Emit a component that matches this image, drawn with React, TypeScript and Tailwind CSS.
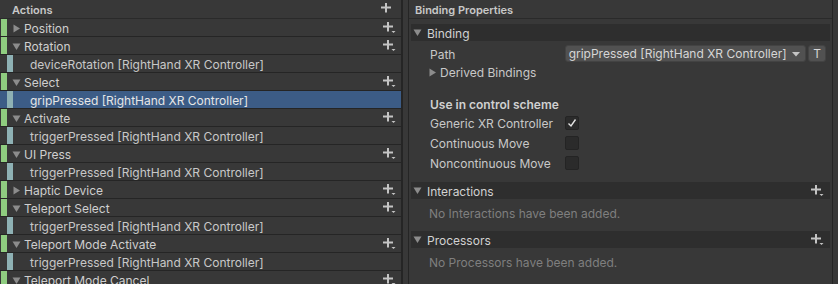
import React from 'react';

type Row =
  | { kind: 'action'; name: string; open: boolean }
  | { kind: 'binding'; name: string; selected?: boolean };

const rows: Row[] = [
  { kind: 'action', name: 'Position', open: false },
  { kind: 'action', name: 'Rotation', open: true },
  { kind: 'binding', name: 'deviceRotation [RightHand XR Controller]' },
  { kind: 'action', name: 'Select', open: true },
  { kind: 'binding', name: 'gripPressed [RightHand XR Controller]', selected: true },
  { kind: 'action', name: 'Activate', open: true },
  { kind: 'binding', name: 'triggerPressed [RightHand XR Controller]' },
  { kind: 'action', name: 'UI Press', open: true },
  { kind: 'binding', name: 'triggerPressed [RightHand XR Controller]' },
  { kind: 'action', name: 'Haptic Device', open: false },
  { kind: 'action', name: 'Teleport Select', open: true },
  { kind: 'binding', name: 'triggerPressed [RightHand XR Controller]' },
  { kind: 'action', name: 'Teleport Mode Activate', open: true },
  { kind: 'binding', name: 'triggerPressed [RightHand XR Controller]' },
  { kind: 'action', name: 'Teleport Mode Cancel', open: true },
];

// foldout arrow
function Arrow({ open }: { open: boolean }) {
  return (
    <svg width="9" height="9" viewBox="0 0 9 9" className="shrink-0">
      {open ? (
        <polygon points="0.5,1.5 8.5,1.5 4.5,8" fill="#8c8c8c" />
      ) : (
        <polygon points="1.5,0.5 8,4.5 1.5,8.5" fill="#8c8c8c" />
      )}
    </svg>
  );
}

function Plus({ dropdown = true }: { dropdown?: boolean }) {
  return (
    <svg width="13" height="12" viewBox="0 0 13 12" className="shrink-0">
      <rect x="0" y="3.5" width="10" height="2" fill="#c4c4c4" />
      <rect x="4" y="-0.5" width="2" height="10" fill="#c4c4c4" />
      {dropdown && <polygon points="8.5,9 12.5,9 10.5,11" fill="#c4c4c4" />}
    </svg>
  );
}

function Checkbox({ checked }: { checked?: boolean }) {
  return (
    <div className="w-[14px] h-[14px] rounded-[2px] bg-[#2b2b2b] border border-[#242424] flex items-center justify-center">
      {checked && (
        <svg width="10" height="10" viewBox="0 0 10 10">
          <polyline points="1.5,5.5 4,8 8.5,1.5" fill="none" stroke="#e4e4e4" strokeWidth="1.4" />
        </svg>
      )}
    </div>
  );
}

function Foldout({ title, plus }: { title: string; plus?: boolean }) {
  return (
    <div className="h-[17px] bg-[#2e2e2e] flex items-center pl-[2px] pr-[6px]">
      <Arrow open />
      <span className="ml-[5px] pt-[2px] text-[#d2d2d2]">{title}</span>
      <div className="flex-1" />
      {plus && <Plus />}
    </div>
  );
}

export default function App() {
  return (
    <div
      className="w-[838px] h-[284px] overflow-hidden bg-[#383838] flex text-[12px] leading-none text-[#c8c8c8]"
      style={{ fontFamily: 'Inter, "Noto Sans", sans-serif' }}
    >
      {/* Actions list */}
      <div className="w-[403px] shrink-0 flex flex-col border-r-2 border-[#252525]">
        <div className="h-[19px] shrink-0 flex items-center pl-[12px] pr-[7px] border-b border-[#2a2a2a]">
          <span className="pt-[2px] text-[11px] font-semibold text-[#c8c8c8]">Actions</span>
          <div className="flex-1" />
          <Plus dropdown={false} />
        </div>
        {rows.map((r, i) =>
          r.kind === 'action' ? (
            <div key={i} className="h-[18px] shrink-0 flex items-center border-b border-[#252525] pl-[1px] pr-[5px]">
              <div className="w-[6px] h-full bg-[#8fcd80]" />
              <div className="ml-[5px] pt-[1px]">
                <Arrow open={r.open} />
              </div>
              <span className="ml-[3px] pt-[2px] text-[#cfcfcf]">{r.name}</span>
              <div className="flex-1" />
              <Plus />
            </div>
          ) : (
            <div
              key={i}
              className={
                r.selected
                  ? 'h-[18px] shrink-0 flex items-center border-b border-[#252525] bg-[#3c5c86] pl-[7px]'
                  : 'h-[18px] shrink-0 flex items-center border-b border-[#252525] pl-[7px]'
              }
            >
              <div className="w-[6px] h-full bg-[#8eb1b4]" />
              <span className={r.selected ? 'ml-[17px] pt-[2px] text-[#e6e6e6]' : 'ml-[17px] pt-[2px] text-[#c8c8c8]'}>
                {r.name}
              </span>
            </div>
          )
        )}
      </div>

      {/* Binding properties */}
      <div className="ml-[5px] w-[425px] shrink-0 flex flex-col border-l border-r border-[#252525]">
        <div className="h-[19px] shrink-0 flex items-center pl-[6px] border-b border-[#2a2a2a]">
          <span className="pt-[2px] text-[11px] font-semibold text-[#c8c8c8]">Binding Properties</span>
        </div>
        <div className="flex flex-col px-[2px] pt-[5px]">
          <Foldout title="Binding" />
          <div className="mt-[4px] h-[17px] flex items-center pl-[19px] pr-[4px]">
            <span className="w-[135px] pt-[2px]">Path</span>
            <div className="w-[242px] h-[17px] rounded-[3px] bg-[#515151] border border-[#434343] flex items-center pl-[3px] pr-[5px] text-[#d6d6d6]">
              <span className="pt-[1px]">gripPressed [RightHand XR Controller]</span>
              <div className="flex-1" />
              <svg width="8" height="6" viewBox="0 0 8 6">
                <polygon points="0,1 8,1 4,5.5" fill="#c4c4c4" />
              </svg>
            </div>
            <div className="ml-[2px] w-[18px] h-[17px] pt-[1px] rounded-[3px] bg-[#515151] border border-[#434343] flex items-center justify-center text-[#d6d6d6]">
              T
            </div>
          </div>
          <div className="mt-[1px] h-[18px] flex items-center pl-[17px]">
            <Arrow open={false} />
            <span className="ml-[3px] pt-[2px]">Derived Bindings</span>
          </div>
          <div className="mt-[14px] h-[18px] flex items-center pl-[19px]">
            <span className="pt-[2px] font-semibold text-[#d0d0d0]">Use in control scheme</span>
          </div>
          {[
            { label: 'Generic XR Controller', checked: true },
            { label: 'Continuous Move', checked: false },
            { label: 'Noncontinuous Move', checked: false },
          ].map((c) => (
            <div key={c.label} className="h-[20px] flex items-center pl-[19px]">
              <span className="w-[135px] pt-[2px]">{c.label}</span>
              <Checkbox checked={c.checked} />
            </div>
          ))}
          <div className="mt-[9px]">
            <Foldout title="Interactions" plus />
          </div>
          <div className="mt-[5px] h-[18px] flex items-center pl-[18px] pt-[2px] text-[#7f7f7f]">
            No Interactions have been added.
          </div>
          <div className="mt-[9px]">
            <Foldout title="Processors" plus />
          </div>
          <div className="mt-[5px] h-[18px] flex items-center pl-[18px] pt-[2px] text-[#7f7f7f]">
            No Processors have been added.
          </div>
        </div>
      </div>
    </div>
  );
}
